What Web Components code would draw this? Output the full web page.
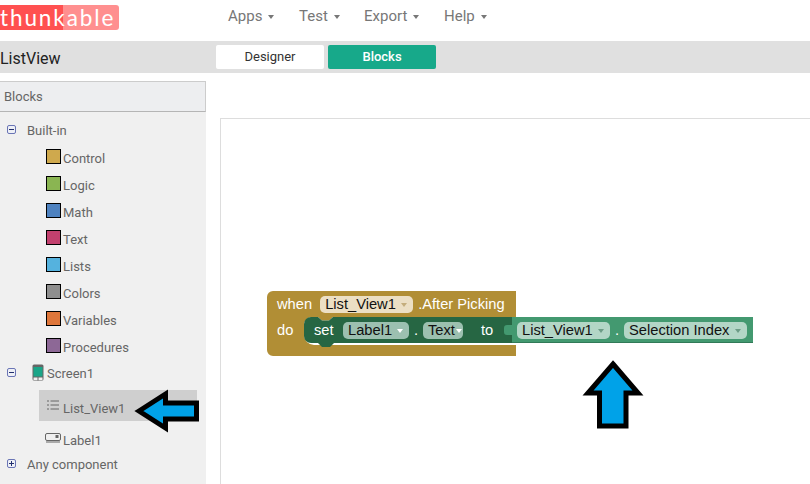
<!DOCTYPE html>
<html>
<head>
<meta charset="utf-8">
<title>ListView blocks</title>
<style>
  html, body { margin: 0; height: 100%; overflow: hidden; background: #fff; }
  body { font-family: Roboto, sans-serif; }
</style>
</head>
<body>
<app-shell></app-shell>
<script>
class AppHeader extends HTMLElement {
  constructor() {
    super();
    this.attachShadow({ mode: "open" });
    this.shadowRoot.innerHTML = `
      <style>
      :host { display: flex; height: 41px; box-sizing: border-box; background: #fff; }
      .logo {
        display: flex; width: 119px; height: 25px; margin-top: 5px;
        background: linear-gradient(90deg, #ff5050 63px, #ff8f8f 63px);
        border-radius: 0 3px 3px 0;
        font: 400 22.5px/25px Lato, sans-serif; letter-spacing: 1.9px; color: #fff;
      }
      nav { display: flex; margin-left: 109px; height: 32px; align-items: center; }
      .item { font-size: 15px; color: #777; display: flex; align-items: center; }
      .item::after {
        content: ""; margin-left: 6px; margin-top: 1px;
        border: 3px solid transparent; border-top: 4px solid #777; border-bottom: 0;
      }
      </style>
      <div class="logo">thunkable</div>
      <nav>
        <div class="item" style="width:71px">Apps</div>
        <div class="item" style="width:65px">Test</div>
        <div class="item" style="width:80px">Export</div>
        <div class="item">Help</div>
      </nav>`;
  }
}

class ProjectBar extends HTMLElement {
  constructor() {
    super();
    this.attachShadow({ mode: "open" });
    this.shadowRoot.innerHTML = `
      <style>
      :host { display: flex; height: 32px; background: #e0e0e0; align-items: center; }
      .name { width: 216px; font-size: 16px; color: #222; padding-top: 2px; box-sizing: border-box; }
      .tab {
        width: 108px; height: 24px; margin-right: 4px; border-radius: 2px; box-sizing: border-box;
        display: flex; align-items: center; justify-content: center; padding-bottom: 1px;
        font-size: 13px; background: #fff; color: #333;
      }
      .tab.on { background: #17a98a; color: #fff; font-weight: 500; }
      </style>
      <div class="name">ListView</div>
      <div class="tab">Designer</div>
      <div class="tab on">Blocks</div>`;
  }
}

class TreeRow extends HTMLElement {
  constructor() {
    super();
    this.attachShadow({ mode: "open" });
    this.shadowRoot.innerHTML = `
      <style>
      :host { display: flex; box-sizing: border-box; height: 27px; align-items: center; font-size: 13px; color: #666; }
      :host([first]) { height: 28px; padding-bottom: 1px; }
      :host([selected]) { height: 31px; margin: 3px 9px 0 39px; padding-top: 5px; background: #cfcfcf; }
      :host([tall]) { height: 30px; padding-top: 8px; }
      </style>
      <slot name="toggle"></slot>
      <slot name="icon"></slot>
      <span><slot></slot></span>`;
  }
}

class TreeToggle extends HTMLElement {
  constructor() {
    super();
    this.attachShadow({ mode: "open" });
    const open = this.hasAttribute("open");
    this.shadowRoot.innerHTML = `
      <style>:host { display: block; width: 27px; height: 9px; padding-left: 7px; box-sizing: border-box; margin-top: -3px; flex: none; }
      svg { display: block; }</style>
      <svg width="9" height="9" viewBox="0 0 9 9">
        <rect x=".5" y=".5" width="8" height="8" rx="1.5" fill="#eef0f6" stroke="#6a75b5"/>
        <path d="M2 4.500h5${open ? "" : "M4.500 2v5"}" stroke="#23306f" fill="none"/>
      </svg>`;
  }
}

class BlockSwatch extends HTMLElement {
  constructor() {
    super();
    this.attachShadow({ mode: "open" });
    this.shadowRoot.innerHTML = `
      <style>
      :host {
        display: block; flex: none; box-sizing: border-box; width: 15px; height: 15px;
        margin: -5px 2px 0 46px; border: 1.4px solid #000;
        background: var(--swatch, #888);
      }
      </style>`;
  }
}

class ToolPalette extends HTMLElement {
  constructor() {
    super();
    this.attachShadow({ mode: "open" });
    this.shadowRoot.innerHTML = `
      <style>
      :host { display: block; width: 206px; height: 403px; margin-top: 8px; flex: none; background: #f0f0f0; }
      .title {
        box-sizing: border-box; height: 31px; padding-left: 4px; display: flex; align-items: center;
        background: #edeef0; border: 1px solid #ccc; border-left: 0; border-bottom: 1px solid #b5b5b5;
        font-size: 13px; color: #666;
      }
      .rows { padding-top: 5px; }
      svg.phone { margin: -3px 3px 0 5px; flex: none; }
      svg.list { margin: -6px 4px 0 8px; flex: none; }
      svg.label { margin: -5px 2px 0 45px; flex: none; }
      </style>
      <div class="title">Blocks</div>
      <div class="rows">
        <tree-row first><tree-toggle slot="toggle" open></tree-toggle>Built-in</tree-row>
        <tree-row><block-swatch slot="icon" style="--swatch:#cfa94d"></block-swatch>Control</tree-row>
        <tree-row><block-swatch slot="icon" style="--swatch:#8ab552"></block-swatch>Logic</tree-row>
        <tree-row><block-swatch slot="icon" style="--swatch:#4e82c0"></block-swatch>Math</tree-row>
        <tree-row><block-swatch slot="icon" style="--swatch:#c2406e"></block-swatch>Text</tree-row>
        <tree-row><block-swatch slot="icon" style="--swatch:#55b2de"></block-swatch>Lists</tree-row>
        <tree-row><block-swatch slot="icon" style="--swatch:#8e8e8e"></block-swatch>Colors</tree-row>
        <tree-row><block-swatch slot="icon" style="--swatch:#df773b"></block-swatch>Variables</tree-row>
        <tree-row><block-swatch slot="icon" style="--swatch:#8d6896"></block-swatch>Procedures</tree-row>
        <tree-row style="margin-top:-1px">
          <tree-toggle slot="toggle" open></tree-toggle>
          <svg slot="icon" class="phone" width="12" height="17" viewBox="0 0 12 17">
            <rect x=".5" y=".5" width="11" height="16" rx="1.5" fill="#666"/>
            <rect x="1.5" y="3" width="9" height="9.5" fill="#1aa588"/>
            <rect x="1.5" y="13.5" width="9" height="2.5" fill="#f0f0f0"/>
            <rect x="5.5" y="13" width="1" height="3.5" fill="#666"/>
          </svg>
          Screen1
        </tree-row>
        <tree-row selected>
          <svg slot="icon" class="list" width="12" height="10" viewBox="0 0 12 10">
            <path d="M0 1h2M3.500 1H12M0 5h2M3.500 5H12M0 9h2M3.500 9H12" stroke="#666" stroke-width="1" fill="none"/>
          </svg>
          List_View1
        </tree-row>
        <tree-row tall>
          <svg slot="icon" class="label" width="16" height="10" viewBox="0 0 16 10">
            <rect x=".5" y=".5" width="15" height="7" rx="1.5" fill="#f0f0f0" stroke="#666"/>
            <rect x="10.5" y="2" width="3" height="3" fill="#666"/>
            <rect x="1" y="8" width="14" height="2" fill="#aaa"/>
          </svg>
          Label1
        </tree-row>
        <tree-row><tree-toggle slot="toggle"></tree-toggle>Any component</tree-row>
      </div>`;
  }
}

class BlockField extends HTMLElement {
  constructor() {
    super();
    this.attachShadow({ mode: "open" });
    this.shadowRoot.innerHTML = `
      <style>
      :host {
        display: flex; flex: none; align-items: center; box-sizing: border-box; height: 17px;
        padding: 0 var(--pad-right, 6px) 0 5px; border-radius: 5px; background: var(--field, #ccc);
        font: 14.7px/17px "Liberation Sans", sans-serif; color: #111;
      }
      .caret {
        margin-left: auto; margin-top: 1px;
        border: 3px solid transparent; border-top: 4px solid var(--caret, #777); border-bottom: 0;
      }
      </style>
      <slot></slot><span class="caret"></span>`;
  }
}

class BlockStack extends HTMLElement {
  constructor() {
    super();
    this.attachShadow({ mode: "open" });
    this.shadowRoot.innerHTML = `
      <style>
      :host {
        display: block; position: absolute; left: 46px; top: 172px; width: 486px; height: 65px;
        font: 14.7px/17px "Liberation Sans", sans-serif; color: #fff;
      }
      svg { position: absolute; left: 0; top: 0; }
      .row { position: relative; display: flex; align-items: center; height: 17px; }
      .r1 { padding: 5px 0 0 10px; --field: #ecdfc4; --caret: #c4ad7c; }
      .r2 { padding: 9px 0 0 10px; }
      .sp { flex: none; }
      .set { --field: #9cc0b0; --caret: #fff; }
      .get { --field: #b3d6c6; --caret: #6d9c86; }
      </style>
      <svg width="486" height="65" viewBox="0 0 486 65">
        <path d="M6 0H249V26H66l-4 3.500h-7l-4-3.500H45a8 8 0 0 0-8 8V44a10 10 0 0 0 10 10H249V65H6a6 6 0 0 1-6-6V6a6 6 0 0 1 6-6Z" fill="#b18e35"/>
        <path d="M44 26H51l4 3.500h7l4-3.500H246V52H67l-4 4h-8l-4-4H44a7 7 0 0 1-7-7V33a7 7 0 0 1 7-7Z" fill="#266643"/>
        <path d="M245 26H486V52H245V44h-5c-2 0-3-1-3-3V37c0-2 1-3 3-3h5Z" fill="#439970"/>
        <path d="M245 51.500H486" stroke="#317a58"/>
      </svg>
      <div class="row r1">
        <span>when</span><span class="sp" style="width:8px"></span>
        <block-field style="width:93px">List_View1</block-field><span class="sp" style="width:5px"></span>
        <span>.After Picking</span>
      </div>
      <div class="row r2">
        <span style="width:17px">do</span><span class="sp" style="width:20px"></span>
        <span style="width:20px">set</span><span class="sp" style="width:9px"></span>
        <block-field class="set" style="width:66px">Label1</block-field><span class="sp" style="width:5px"></span>
        <span style="width:4px">.</span><span class="sp" style="width:5px"></span>
        <block-field class="set" style="width:40px;--pad-right:1px">Text</block-field><span class="sp" style="width:18px"></span>
        <span style="width:13px">to</span><span class="sp" style="width:23px"></span>
        <block-field class="get" style="width:93px">List_View1</block-field><span class="sp" style="width:5px"></span>
        <span style="width:4px">.</span><span class="sp" style="width:5px"></span>
        <block-field class="get" style="width:123px">Selection Index</block-field>
      </div>`;
  }
}

class BlockWorkspace extends HTMLElement {
  constructor() {
    super();
    this.attachShadow({ mode: "open" });
    this.shadowRoot.innerHTML = `
      <style>
      :host {
        display: block; position: relative; flex: 1; margin: 45px 0 0 14px; height: 366px;
        border: 1px solid #ddd; border-width: 1px 0 0 1px; background: #fff;
      }
      </style>
      <slot></slot>`;
  }
}

class CalloutArrow extends HTMLElement {
  constructor() {
    super();
    this.attachShadow({ mode: "open" });
    const d = this.getAttribute("d");
    this.shadowRoot.innerHTML = `
      <style>
      :host { display: block; position: absolute; left: 0; top: 0; pointer-events: none; }
      svg { display: block; }
      </style>
      <svg width="810" height="484" viewBox="0 0 810 484">
        <path d="${d}" fill="#00a2e8" stroke="#000" stroke-width="5" stroke-linejoin="miter"/>
      </svg>`;
  }
}

class AppShell extends HTMLElement {
  constructor() {
    super();
    this.attachShadow({ mode: "open" });
    this.shadowRoot.innerHTML = `
      <style>
      :host { display: block; position: relative; width: 810px; height: 484px; overflow: hidden; font-family: Roboto, sans-serif; }
      .main { display: flex; }
      </style>
      <app-header></app-header>
      <project-bar></project-bar>
      <div class="main">
        <tool-palette></tool-palette>
        <block-workspace><block-stack></block-stack></block-workspace>
      </div>
      <callout-arrow d="M139 411L165.500 394V403H196.500V419H165.500V428Z"></callout-arrow>
      <callout-arrow d="M613 364L638 393H626V426H599.500V393H588Z"></callout-arrow>`;
  }
}

customElements.define("app-header", AppHeader);
customElements.define("project-bar", ProjectBar);
customElements.define("tree-row", TreeRow);
customElements.define("tree-toggle", TreeToggle);
customElements.define("block-swatch", BlockSwatch);
customElements.define("tool-palette", ToolPalette);
customElements.define("block-field", BlockField);
customElements.define("block-stack", BlockStack);
customElements.define("block-workspace", BlockWorkspace);
customElements.define("callout-arrow", CalloutArrow);
customElements.define("app-shell", AppShell);
</script>
</body>
</html>
